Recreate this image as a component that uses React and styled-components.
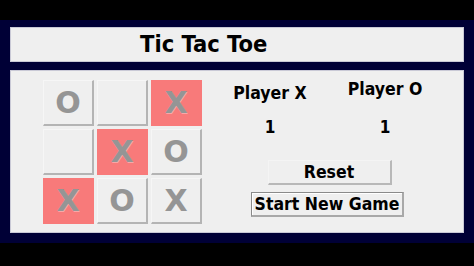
import React from 'react'
import styled, { createGlobalStyle } from 'styled-components'

const GlobalStyle = createGlobalStyle`
  html, body {
    margin: 0;
    padding: 0;
    background: #000;
  }
  body {
    font-family: "DejaVu Sans Condensed", "DejaVu Sans", sans-serif;
    font-stretch: condensed;
  }
`

const Screen = styled.div`
  width: 474px;
  height: 266px;
  background: #000;
  padding-top: 20px;
  box-sizing: border-box;
`

const Frame = styled.div`
  background: #000036;
  padding: 7px 10px 10px;
  display: flex;
  flex-direction: column;
  gap: 8px;
`

const Panel = styled.div`
  background: #efefef;
  border: 1px solid #c9c9d6;
  box-sizing: border-box;
`

const TitleBar = styled(Panel)`
  height: 35px;
  display: flex;
  align-items: center;
  padding-left: 129px;
`

const Title = styled.h1`
  margin: 0;
  font-size: 23.5px;
  font-weight: bold;
  color: #000;
  line-height: 1;
  padding-top: 1px;
`

const Main = styled(Panel)`
  height: 163px;
  display: flex;
  padding: 9px 0 0 32px;
`

const Board = styled.div`
  display: grid;
  grid-template-columns: repeat(3, 51px);
  grid-auto-rows: 46px;
  gap: 3px;
`

const Cell = styled.div`
  box-sizing: border-box;
  display: flex;
  align-items: center;
  justify-content: center;
  font-family: "DejaVu Sans", sans-serif;
  font-stretch: normal;
  font-weight: bold;
  font-size: 30px;
  color: #959595;
  background: ${p => (p.$win ? '#f87a7a' : '#efefef')};
  border-top: 1px solid ${p => (p.$win ? '#f87a7a' : '#f6f6f6')};
  border-left: 1px solid ${p => (p.$win ? '#f87a7a' : '#f6f6f6')};
  border-right: 2px solid ${p => (p.$win ? '#f87a7a' : '#b4b4b4')};
  border-bottom: 2px solid ${p => (p.$win ? '#f87a7a' : '#b4b4b4')};
  text-shadow: ${p => (p.$win ? '1px 1px 0 rgba(255,255,255,0.35)' : 'none')};
`

const Side = styled.div`
  margin-left: 18px;
  width: 215px;
  display: flex;
  flex-direction: column;
`

const Scores = styled.div`
  display: flex;
  gap: 15px;
`

const PlayerCol = styled.div`
  width: 100px;
  display: flex;
  flex-direction: column;
  align-items: center;
`

const PlayerName = styled.div`
  font-size: 17.5px;
  font-weight: bold;
  line-height: 18px;
  margin-top: ${p => (p.$raise ? '0px' : '4px')};
  margin-bottom: ${p => (p.$raise ? '20px' : '16px')};
`

const Score = styled.div`
  font-size: 17px;
  font-weight: bold;
  line-height: 18px;
`

const Buttons = styled.div`
  margin-top: 24px;
  display: flex;
  flex-direction: column;
  align-items: center;
  gap: 7px;
`

const Button = styled.button`
  box-sizing: border-box;
  height: 25px;
  width: ${p => p.$w}px;
  margin-left: ${p => p.$shift || 0}px;
  padding: 0;
  font-family: "DejaVu Sans Condensed", "DejaVu Sans", sans-serif;
  font-stretch: condensed;
  font-size: 17.5px;
  font-weight: bold;
  color: #000;
  background: #efefef;
  border-style: solid;
  border-width: 1px 2px 2px 1px;
  border-color: ${p =>
    p.$framed ? '#8a8a8a #a8a8a8 #a8a8a8 #8a8a8a' : '#f4f4f4 #b8b8b8 #b8b8b8 #f4f4f4'};
  box-shadow: ${p => (p.$framed ? 'inset 1px 1px 0 #fff' : 'none')};
`

const board = [
  ['O', false], ['', false], ['X', true],
  ['', false], ['X', true], ['O', false],
  ['X', true], ['O', false], ['X', false],
]

export default function App() {
  return (
    <Screen>
      <GlobalStyle />
      <Frame>
        <TitleBar>
          <Title>Tic Tac Toe</Title>
        </TitleBar>
        <Main>
          <Board>
            {board.map(([mark, win], i) => (
              <Cell key={i} $win={win}>{mark}</Cell>
            ))}
          </Board>
          <Side>
            <Scores>
              <PlayerCol>
                <PlayerName>Player X</PlayerName>
                <Score>1</Score>
              </PlayerCol>
              <PlayerCol>
                <PlayerName $raise>Player O</PlayerName>
                <Score>1</Score>
              </PlayerCol>
            </Scores>
            <Buttons>
              <Button $w={124} $shift={4}>Reset</Button>
              <Button $w={153} $framed>Start New Game</Button>
            </Buttons>
          </Side>
        </Main>
      </Frame>
    </Screen>
  )
}
